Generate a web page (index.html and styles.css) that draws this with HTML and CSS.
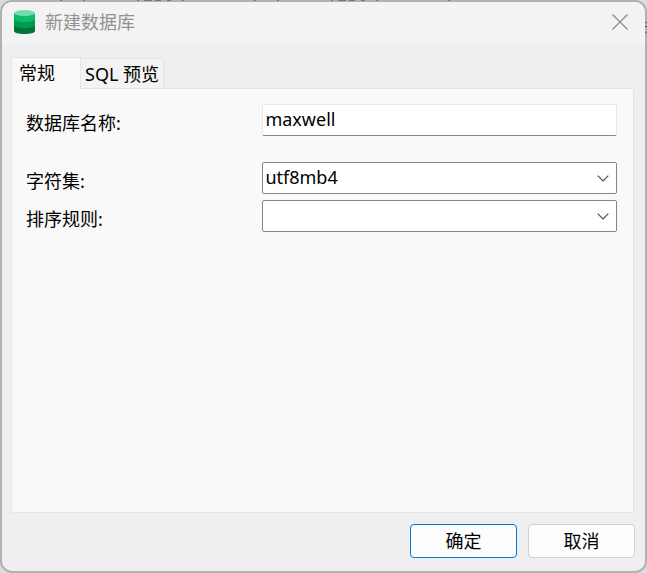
FILE: index.html
```html
<!DOCTYPE html>
<html lang="zh-CN">
<head>
<meta charset="utf-8">
<meta name="viewport" content="width=device-width, initial-scale=1">
<title>新建数据库</title>
<link rel="stylesheet" href="styles.css">
</head>
<body>
<form class="dialog">
  <header class="titlebar">
    <svg class="logo" width="22" height="24" viewBox="0 0 22 24" aria-hidden="true">
      <path fill="#00753b" d="M0 15h21v6c0 1.700-4.700 3-10.500 3S0 22.700 0 21z"/>
      <path fill="#009b50" d="M0 9h21v6c0 1.700-4.700 3-10.500 3S0 16.700 0 15z"/>
      <path fill="#0cbc68" d="M0 3h21v6c0 1.700-4.700 3-10.500 3S0 10.700 0 9z"/>
      <ellipse fill="#72deaa" cx="10.500" cy="3" rx="10.500" ry="3"/>
    </svg>
    <h1 class="title">新建数据库</h1>
    <button class="close" type="button" aria-label="关闭">
      <svg width="16" height="16" viewBox="0 0 16 16" fill="none" stroke="#8c8c8c" stroke-width="1.300" aria-hidden="true"><path d="M.5.5l15 15M15.500.5l-15 15"/></svg>
    </button>
  </header>
  <main class="content">
    <div class="tabs" role="tablist">
      <button class="tab tab-active" type="button" role="tab" aria-selected="true">常规</button>
      <button class="tab" type="button" role="tab" aria-selected="false">SQL 预览</button>
    </div>
    <section class="panel" role="tabpanel">
      <div class="row row-name">
        <label for="name">数据库名称:</label>
        <input class="field" id="name" type="text" value="maxwell">
      </div>
      <div class="row">
        <label for="charset">字符集:</label>
        <div class="combo">
          <select class="field" id="charset"><option>utf8mb4</option></select>
          <svg class="chevron" width="12" height="7" viewBox="0 0 12 7" fill="none" stroke="#505050" stroke-width="1.200" aria-hidden="true"><path d="M.7.7L6 6 11.300.7"/></svg>
        </div>
      </div>
      <div class="row">
        <label for="collation">排序规则:</label>
        <div class="combo">
          <select class="field" id="collation"><option></option></select>
          <svg class="chevron" width="12" height="7" viewBox="0 0 12 7" fill="none" stroke="#505050" stroke-width="1.200" aria-hidden="true"><path d="M.7.7L6 6 11.300.7"/></svg>
        </div>
      </div>
    </section>
    <footer class="actions">
      <button class="button button-primary" type="submit">确定</button>
      <button class="button" type="button">取消</button>
    </footer>
  </main>
</form>
<svg class="backdrop backdrop-top" width="400" height="1" viewBox="0 0 400 1" aria-hidden="true">
  <path stroke="#777" stroke-width="2" stroke-dasharray="2 21 2 52 2 5 8 3 6 6 4 11 2 70" d="M10 .5h390"/>
</svg>
<svg class="backdrop backdrop-right" width="2" height="14" viewBox="0 0 2 14" fill="none" stroke="#4a3d4c" aria-hidden="true">
  <path d="M0 2.500L2 .5M0 5.500h2M0 12.500l2-2"/>
</svg>
</body>
</html>
```
FILE: styles.css
```css
* {
  box-sizing: border-box;
}

body {
  margin: 0;
  background: #dcdcdc;
  color: #000;
  font-family: "Noto Sans", "Noto Sans CJK SC", sans-serif;
  font-size: 18px;
  line-height: 24px;
}

button,
input,
select {
  margin: 0;
  font: inherit;
  color: inherit;
}

.dialog {
  display: flex;
  flex-direction: column;
  min-height: 100vh;
  border: 2px solid #b1b1b1;
  border-radius: 12px;
  background: #efefef;
  overflow: hidden;
}

.titlebar {
  display: flex;
  align-items: center;
  height: 43px;
  padding: 0 17px 4px 12px;
  background: #f3f3f3;
}

.logo {
  margin-right: 9px;
}

.title {
  flex: 1;
  margin: 0;
  font-size: 18px;
  font-weight: 400;
  color: #929292;
}

.close {
  display: flex;
  padding: 0;
  border: 0;
  background: none;
}

.content {
  flex: 1;
  display: flex;
  flex-direction: column;
  padding: 12px 10px 13px 9px;
}

.tabs {
  display: flex;
  align-items: flex-end;
}

.tab {
  height: 30px;
  padding: 0 4px;
  border: 1px solid #e5e5e5;
  border-left: 0;
  border-bottom: 0;
  background: #f3f3f3;
  white-space: nowrap;
}

.tab-active {
  position: relative;
  width: 70px;
  height: 32px;
  margin-bottom: -1px;
  padding: 0 7px 2px;
  border-left: 1px solid #e5e5e5;
  background: #f9f9f9;
  text-align: left;
}

.panel {
  flex: 1;
  display: flex;
  flex-direction: column;
  gap: 6px;
  margin-right: 1px;
  padding: 15px 16px 16px 14px;
  border: 1px solid #e5e5e5;
  background: #f9f9f9;
}

.row {
  display: grid;
  grid-template-columns: 2fr 3fr;
  align-items: center;
}

.row label {
  padding-top: 5px;
}

.row-name {
  margin-bottom: 20px;
}

.field {
  display: block;
  width: 100%;
  height: 32px;
  padding: 0 2px 2px;
  border: 1px solid #868686;
  border-radius: 2px;
  background: #fff;
  appearance: none;
}

input.field {
  border-color: #e8e8e8 #e8e8e8 #868686;
}

.combo {
  position: relative;
}

.chevron {
  position: absolute;
  top: 13px;
  right: 8px;
  pointer-events: none;
}

.actions {
  display: flex;
  justify-content: flex-end;
  gap: 11px;
  padding-top: 11px;
}

.button {
  width: 107px;
  height: 34px;
  padding: 0;
  border: 1px solid #d0d0d0;
  border-radius: 4px;
  background: #fdfdfd;
}

.button-primary {
  border-color: #0078d4;
}

/* Traces of the window behind the dialog, seen past its edges */
.backdrop {
  position: absolute;
  pointer-events: none;
}

.backdrop-top {
  top: 0;
  left: 50px;
}

.backdrop-right {
  top: 21px;
  right: 0;
}
```
